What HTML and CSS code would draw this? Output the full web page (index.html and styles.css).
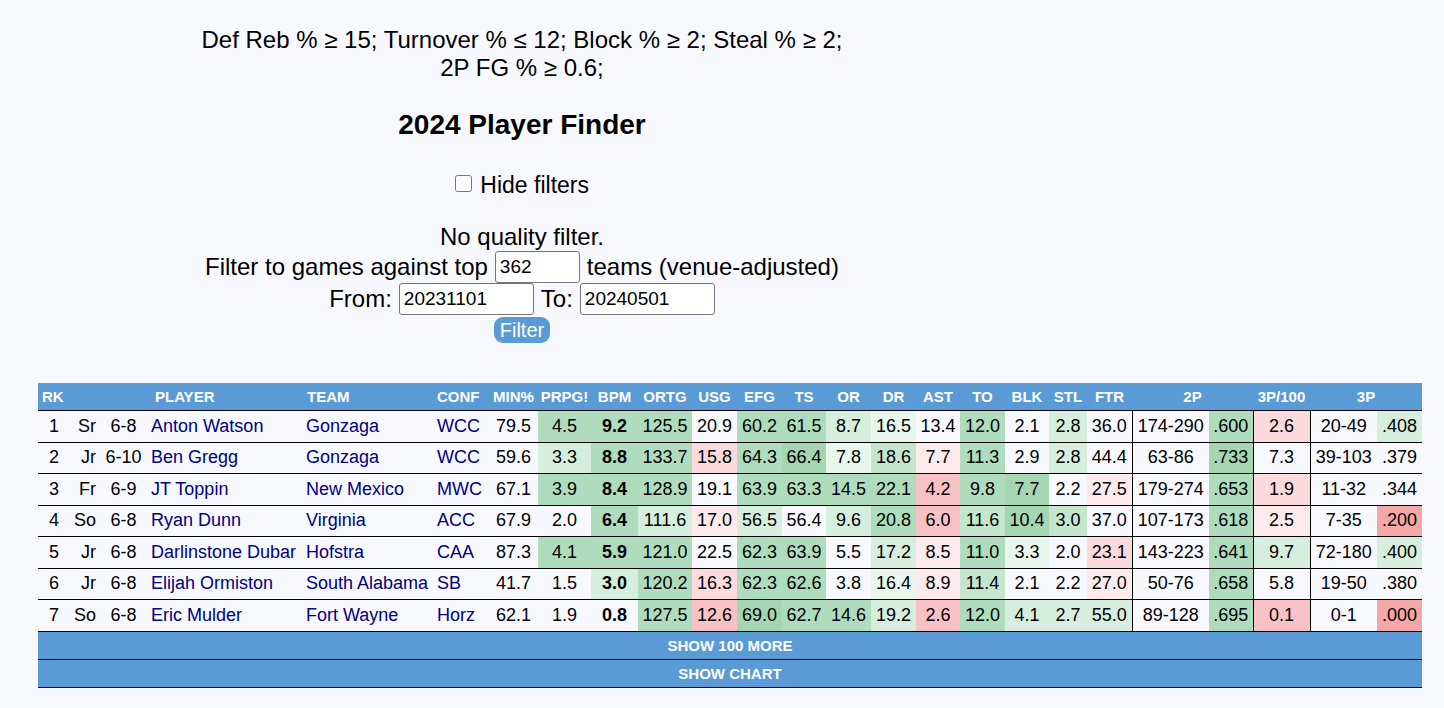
FILE: index.html
```html
<!DOCTYPE html>
<html>
<head>
<meta charset="utf-8">
<link rel="stylesheet" href="styles.css">
</head>
<body>
<div class="top">
  <div class="criteria">Def Reb % ≥ 15; Turnover % ≤ 12; Block % ≥ 2; Steal % ≥ 2;<br>2P FG % ≥ 0.6;</div>
  <h2 class="title">2024 Player Finder</h2>
  <div class="hide"><label><input type="checkbox" class="cb"> Hide filters</label></div>
  <div class="line quality">No quality filter.</div>
  <div class="line row">Filter to games against top <input class="inp small" type="text" value="362"> teams (venue-adjusted)</div>
  <div class="line row">From: <input class="inp wide" type="text" value="20231101"> To: <input class="inp wide" type="text" value="20240501"></div>
  <div class="line btnrow"><button class="btn">Filter</button></div>
</div>

<table class="stats">
  <colgroup>
    <col style="width:32px"><col style="width:30px"><col style="width:47px"><col style="width:156px"><col style="width:131px"><col style="width:55px"><col style="width:49px"><col style="width:53px"><col style="width:47px"><col style="width:54px"><col style="width:45px"><col style="width:45px"><col style="width:44px"><col style="width:45px"><col style="width:45px"><col style="width:44px"><col style="width:45px"><col style="width:44px"><col style="width:38px"><col style="width:45px"><col style="width:77px"><col style="width:44px"><col style="width:57px"><col style="width:67px"><col style="width:45px">
  </colgroup>
  <thead>
    <tr>
      <th class="l rk">RK</th><th></th><th></th><th class="l pl">PLAYER</th><th class="l tm">TEAM</th><th class="l cf">CONF</th>
      <th>MIN%</th><th>PRPG!</th><th>BPM</th><th>ORTG</th><th>USG</th><th>EFG</th><th>TS</th><th>OR</th><th>DR</th><th>AST</th><th>TO</th><th>BLK</th><th>STL</th><th>FTR</th><th colspan="2">2P</th><th>3P/100</th><th colspan="2">3P</th>
    </tr>
  </thead>
  <tbody>
    <tr>
      <td>1</td><td class="cls">Sr</td><td>6-8</td><td class="pl"><a>Anton Watson</a></td><td class="tm"><a>Gonzaga</a></td><td class="cf"><a>WCC</a></td>
      <td>79.5</td><td class="g3">4.5</td><td class="g3 b">9.2</td><td class="g3">125.5</td><td>20.9</td><td class="g3">60.2</td><td class="g3">61.5</td><td class="g1">8.7</td><td class="g0">16.5</td><td>13.4</td><td class="g3">12.0</td><td>2.1</td><td class="g1">2.8</td><td>36.0</td>
      <td class="sep">174-290</td><td class="g3">.600</td><td class="sep r2">2.6</td><td class="sep">20-49</td><td class="g1">.408</td>
    </tr>
    <tr>
      <td>2</td><td class="cls">Jr</td><td>6-10</td><td class="pl"><a>Ben Gregg</a></td><td class="tm"><a>Gonzaga</a></td><td class="cf"><a>WCC</a></td>
      <td>59.6</td><td class="g1">3.3</td><td class="g3 b">8.8</td><td class="g3">133.7</td><td class="r2">15.8</td><td class="g3">64.3</td><td class="g4">66.4</td><td class="g0">7.8</td><td class="g2">18.6</td><td class="r1">7.7</td><td class="g3">11.3</td><td>2.9</td><td class="g1">2.8</td><td>44.4</td>
      <td class="sep">63-86</td><td class="g4">.733</td><td class="sep">7.3</td><td class="sep">39-103</td><td>.379</td>
    </tr>
    <tr>
      <td>3</td><td class="cls">Fr</td><td>6-9</td><td class="pl"><a>JT Toppin</a></td><td class="tm"><a>New Mexico</a></td><td class="cf"><a>MWC</a></td>
      <td>67.1</td><td class="g3">3.9</td><td class="g3 b">8.4</td><td class="g3">128.9</td><td>19.1</td><td class="g3">63.9</td><td class="g3">63.3</td><td class="g3">14.5</td><td class="g3">22.1</td><td class="r3">4.2</td><td class="g3">9.8</td><td class="g4">7.7</td><td>2.2</td><td class="r1">27.5</td>
      <td class="sep">179-274</td><td class="g3">.653</td><td class="sep r2">1.9</td><td class="sep">11-32</td><td>.344</td>
    </tr>
    <tr>
      <td>4</td><td class="cls">So</td><td>6-8</td><td class="pl"><a>Ryan Dunn</a></td><td class="tm"><a>Virginia</a></td><td class="cf"><a>ACC</a></td>
      <td>67.9</td><td>2.0</td><td class="g3 b">6.4</td><td class="g1">111.6</td><td class="r1">17.0</td><td class="g1">56.5</td><td>56.4</td><td class="g1">9.6</td><td class="g3">20.8</td><td class="r3">6.0</td><td class="g2">11.6</td><td class="g4">10.4</td><td class="g2">3.0</td><td>37.0</td>
      <td class="sep">107-173</td><td class="g3">.618</td><td class="sep r1">2.5</td><td class="sep">7-35</td><td class="r4">.200</td>
    </tr>
    <tr>
      <td>5</td><td class="cls">Jr</td><td>6-8</td><td class="pl"><a>Darlinstone Dubar</a></td><td class="tm"><a>Hofstra</a></td><td class="cf"><a>CAA</a></td>
      <td>87.3</td><td class="g3">4.1</td><td class="g3 b">5.9</td><td class="g3">121.0</td><td>22.5</td><td class="g3">62.3</td><td class="g3">63.9</td><td>5.5</td><td class="g1">17.2</td><td class="r1">8.5</td><td class="g3">11.0</td><td class="g0">3.3</td><td>2.0</td><td class="r2">23.1</td>
      <td class="sep">143-223</td><td class="g3">.641</td><td class="sep g1">9.7</td><td class="sep">72-180</td><td class="g1">.400</td>
    </tr>
    <tr>
      <td>6</td><td class="cls">Jr</td><td>6-8</td><td class="pl"><a>Elijah Ormiston</a></td><td class="tm"><a>South Alabama</a></td><td class="cf"><a>SB</a></td>
      <td>41.7</td><td>1.5</td><td class="g1 b">3.0</td><td class="g3">120.2</td><td class="r2">16.3</td><td class="g3">62.3</td><td class="g3">62.6</td><td>3.8</td><td class="g0">16.4</td><td class="r1">8.9</td><td class="g2">11.4</td><td>2.1</td><td>2.2</td><td class="r1">27.0</td>
      <td class="sep">50-76</td><td class="g3">.658</td><td class="sep">5.8</td><td class="sep">19-50</td><td>.380</td>
    </tr>
    <tr>
      <td>7</td><td class="cls">So</td><td>6-8</td><td class="pl"><a>Eric Mulder</a></td><td class="tm"><a>Fort Wayne</a></td><td class="cf"><a>Horz</a></td>
      <td>62.1</td><td>1.9</td><td class="b">0.8</td><td class="g3">127.5</td><td class="r3">12.6</td><td class="g4">69.0</td><td class="g3">62.7</td><td class="g3">14.6</td><td class="g1">19.2</td><td class="r3">2.6</td><td class="g3">12.0</td><td class="g1">4.1</td><td class="g1">2.7</td><td class="g1">55.0</td>
      <td class="sep">89-128</td><td class="g3">.695</td><td class="sep r3">0.1</td><td class="sep">0-1</td><td class="r4">.000</td>
    </tr>
  </tbody>
</table>
<div class="bar">SHOW 100 MORE</div>
<div class="bar">SHOW CHART</div>
</body>
</html>
```
FILE: styles.css
```css
html, body {
  background: #f8f9ff;
}
body {
  margin: 8px;
  font-family: "Liberation Sans", Arial, sans-serif;
  color: #000;
}
.top {
  width: 1028px;
  text-align: center;
  font-size: 24px;
  line-height: 28px;
}
.criteria {
  padding-top: 18px;
}
.title {
  font-size: 28px;
  line-height: 32px;
  font-weight: bold;
  margin: 27px 0 0 0;
}
.hide {
  margin-top: 30px;
  font-size: 23px;
  line-height: 28px;
}
.cb {
  width: 17px;
  height: 17px;
  margin: 0 2px 0 0;
  vertical-align: 1px;
}
.quality {
  margin-top: 24px;
}
.line.row {
  display: flex;
  justify-content: center;
  align-items: center;
  gap: 7px;
  height: 32px;
}
.inp {
  font-family: "Liberation Sans", Arial, sans-serif;
  font-size: 19px;
  height: 32px;
  box-sizing: border-box;
  border: 1px solid #767676;
  border-radius: 3px;
  background: #fff;
  padding: 0 4px;
  color: #000;
}
.inp.small { width: 85px; }
.inp.wide { width: 135px; }
.btnrow {
  display: flex;
  justify-content: center;
  margin-top: 2px;
}
.btn {
  font-family: "Liberation Sans", Arial, sans-serif;
  font-size: 20px;
  line-height: 26px;
  height: 26px;
  padding: 0 6px;
  border: none;
  border-radius: 9px;
  background: #5b9bd5;
  color: #fff;
}
.stats {
  margin: 40px 0 0 30px;
  width: 1384px;
  table-layout: fixed;
  border-collapse: collapse;
  font-size: 18px;
}
.stats th {
  background: #5b9bd5;
  color: #fff;
  font-size: 15px;
  font-weight: bold;
  height: 27px;
  padding: 0;
  text-align: center;
  border-bottom: 1px solid #000;
  white-space: nowrap;
}
.stats th.l { text-align: left; }
.stats th.rk { padding-left: 4px; }
.stats th.pl { padding-left: 8px; }
.stats th.tm { padding-left: 4px; }
.stats th.cf { padding-left: 3px; }
.stats td {
  height: 30.5px;
  padding: 0;
  text-align: center;
  border-bottom: 1px solid #000;
  white-space: nowrap;
  overflow: hidden;
}
.stats td.cls { text-align: right; padding-right: 4px; }
.stats td.pl { text-align: left; padding-left: 4px; }
.stats td.tm { text-align: left; padding-left: 3px; }
.stats td.cf { text-align: left; padding-left: 3px; }
.stats td.sep { border-left: 1px solid #000; }
.stats a { color: #000080; }
.b { font-weight: bold; }
.g0 { background: #e9f6ed; }
.g1 { background: #d6eedd; }
.g2 { background: #c3e6cd; }
.g3 { background: #afdcbd; }
.g4 { background: #a3d6b1; }
.r1 { background: #fdeaed; }
.r2 { background: #fbdadd; }
.r3 { background: #f8c2c5; }
.r4 { background: #f5a6a7; }
.bar {
  margin-left: 30px;
  width: 1384px;
  height: 27px;
  line-height: 27px;
  background: #5b9bd5;
  color: #fff;
  font-weight: bold;
  font-size: 15px;
  text-align: center;
  border-bottom: 1px solid #000;
}
```
